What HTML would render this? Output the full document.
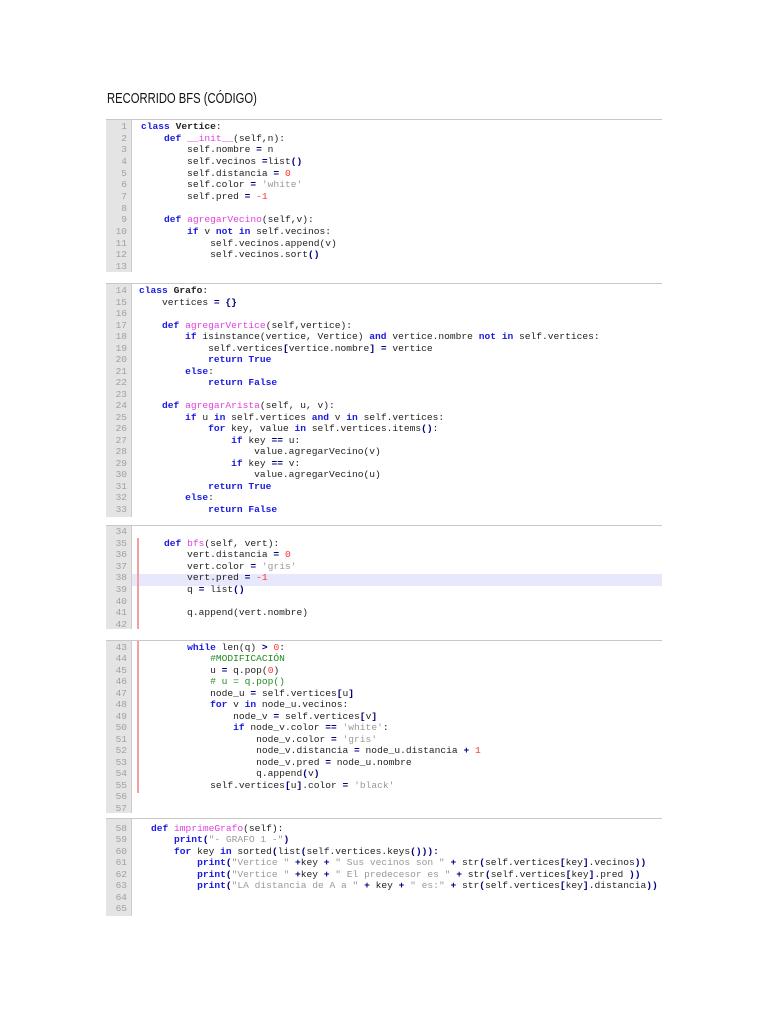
<!DOCTYPE html>
<html><head><meta charset="utf-8"><style>
body{margin:0;background:#fff;width:768px;height:1024px;position:relative;overflow:hidden}
.t{position:absolute;left:107px;top:91px;font:14.5px "Liberation Sans",sans-serif;color:#111;transform:scaleX(0.775);transform-origin:left top;white-space:nowrap}
.b{position:absolute;left:106px;width:556px;background:#fff;border-top:1px solid #c8c8c8;overflow:hidden}
.g{position:absolute;left:0;top:0;bottom:0;width:25px;background:#e4e4e4;border-right:1px solid #ccc}
.ln{position:absolute;left:0;width:21px;text-align:right;font:9.5px "Liberation Mono",monospace;color:#a0a0a0}
pre{position:absolute;margin:0;font:9.6px/11.65px "Liberation Mono",monospace;color:#222}
.k{color:#1a1ae0;font-weight:bold}.f{color:#e040e0}.n{color:#ff3030}.s{color:#999}.c{color:#209020}.o{color:#000080;font-weight:bold}
.r{position:absolute;left:31px;width:2px;background:#f0a0a0}
</style></head><body>
<div class="t">RECORRIDO BFS (CÓDIGO)</div>

<div class="b" style="top:119px;height:152px">
<div class="g"></div>
<pre class="ln" style="top:1px;line-height:11.65px">1
2
3
4
5
6
7
8
9
10
11
12
13</pre>
<pre style="left:35px;top:1px"><span class="k">class</span> <b style="color:#222">Vertice</b>:
    <span class="k">def</span> <span class="f">__init__</span>(self,n):
        self.nombre <span class="o">=</span> n
        self.vecinos <span class="o">=</span>list<span class="o">()</span>
        self.distancia <span class="o">=</span> <span class="n">0</span>
        self.color <span class="o">=</span> <span class="s">'white'</span>
        self.pred <span class="o">=</span> <span class="n">-1</span>

    <span class="k">def</span> <span class="f">agregarVecino</span>(self,v):
        <span class="k">if</span> v <span class="k">not in</span> self.vecinos:
            self.vecinos.append(v)
            self.vecinos.sort<span class="o">()</span>
</pre></div>

<div class="b" style="top:283px;height:233px">
<div class="g"></div>
<pre class="ln" style="top:1px;line-height:11.5px">14
15
16
17
18
19
20
21
22
23
24
25
26
27
28
29
30
31
32
33</pre>
<pre style="left:33px;top:1px;line-height:11.5px"><span class="k">class</span> <b style="color:#222">Grafo</b>:
    vertices <span class="o">= {}</span>

    <span class="k">def</span> <span class="f">agregarVertice</span>(self,vertice):
        <span class="k">if</span> isinstance(vertice, Vertice) <span class="k">and</span> vertice.nombre <span class="k">not in</span> self.vertices:
            self.vertices<span class="o">[</span>vertice.nombre<span class="o">]</span> <span class="o">=</span> vertice
            <span class="k">return True</span>
        <span class="k">else</span>:
            <span class="k">return False</span>

    <span class="k">def</span> <span class="f">agregarArista</span>(self, u, v):
        <span class="k">if</span> u <span class="k">in</span> self.vertices <span class="k">and</span> v <span class="k">in</span> self.vertices:
            <span class="k">for</span> key, value <span class="k">in</span> self.vertices.items<span class="o">()</span>:
                <span class="k">if</span> key <span class="o">==</span> u:
                    value.agregarVecino(v)
                <span class="k">if</span> key <span class="o">==</span> v:
                    value.agregarVecino(u)
            <span class="k">return True</span>
        <span class="k">else</span>:
            <span class="k">return False</span></pre></div>

<div class="b" style="top:525px;height:103px">
<div style="position:absolute;left:26px;right:0;top:48px;height:11.6px;background:#e8e8fc"></div>
<div class="g"></div>
<div class="r" style="top:12px;bottom:0"></div>
<pre class="ln" style="top:0;line-height:11.6px">34
35
36
37
38
39
40
41
42</pre>
<pre style="left:35px;top:0;line-height:11.6px">

    <span class="k">def</span> <span class="f">bfs</span>(self, vert):
        vert.distancia <span class="o">=</span> <span class="n">0</span>
        vert.color <span class="o">=</span> <span class="s">'gris'</span>
        vert.pred <span class="o">=</span> <span class="n">-1</span>
        q <span class="o">=</span> list<span class="o">()</span>

        q.append(vert.nombre)</pre></div>

<div class="b" style="top:640px;height:172px">
<div class="g"></div>
<div class="r" style="top:0;bottom:20px"></div>
<pre class="ln" style="top:0.5px;line-height:11.5px">43
44
45
46
47
48
49
50
51
52
53
54
55
56
57</pre>
<pre style="left:35px;top:0.5px;line-height:11.5px">        <span class="k">while</span> len(q) <span class="o">&gt;</span> <span class="n">0</span>:
            <span class="c">#MODIFICACIÓN</span>
            u <span class="o">=</span> q.pop(<span class="n">0</span>)
            <span class="c"># u = q.pop()</span>
            node_u <span class="o">=</span> self.vertices<span class="o">[</span>u<span class="o">]</span>
            <span class="k">for</span> v <span class="k">in</span> node_u.vecinos:
                node_v <span class="o">=</span> self.vertices<span class="o">[</span>v<span class="o">]</span>
                <span class="k">if</span> node_v.color <span class="o">==</span> <span class="s">'white'</span>:
                    node_v.color <span class="o">=</span> <span class="s">'gris'</span>
                    node_v.distancia <span class="o">=</span> node_u.distancia <span class="o">+</span> <span class="n">1</span>
                    node_v.pred <span class="o">=</span> node_u.nombre
                    q.append<span class="o">(</span>v<span class="o">)</span>
            self.vertices<span class="o">[</span>u<span class="o">]</span>.color <span class="o">=</span> <span class="s">'black'</span></pre></div>

<div class="b" style="top:818px;height:97px;width:556px;overflow:visible">
<div class="g"></div>
<pre class="ln" style="top:4px;line-height:11.45px">58
59
60
61
62
63
64
65</pre>
<pre style="left:45px;top:4px;line-height:11.45px"><span class="k">def</span> <span class="f">imprimeGrafo</span>(self):
    <span class="k">print</span><span class="o">(</span><span class="s">"- GRAFO 1 -"</span><span class="o">)</span>
    <span class="k">for</span> key <span class="k">in</span> sorted<span class="o">(</span>list<span class="o">(</span>self.vertices.keys<span class="o">())):</span>
        <span class="k">print</span><span class="o">(</span><span class="s">"Vertice "</span> <span class="o">+</span>key <span class="o">+</span> <span class="s">" Sus vecinos son "</span> <span class="o">+</span> str<span class="o">(</span>self.vertices<span class="o">[</span>key<span class="o">]</span>.vecinos<span class="o">))</span>
        <span class="k">print</span><span class="o">(</span><span class="s">"Vertice "</span> <span class="o">+</span>key <span class="o">+</span> <span class="s">" El predecesor es "</span> <span class="o">+</span> str<span class="o">(</span>self.vertices<span class="o">[</span>key<span class="o">]</span>.pred <span class="o">))</span>
        <span class="k">print</span><span class="o">(</span><span class="s">"LA distancia de A a "</span> <span class="o">+</span> key <span class="o">+</span> <span class="s">" es:"</span> <span class="o">+</span> str<span class="o">(</span>self.vertices<span class="o">[</span>key<span class="o">]</span>.distancia<span class="o">))</span></pre></div>
</body></html>
